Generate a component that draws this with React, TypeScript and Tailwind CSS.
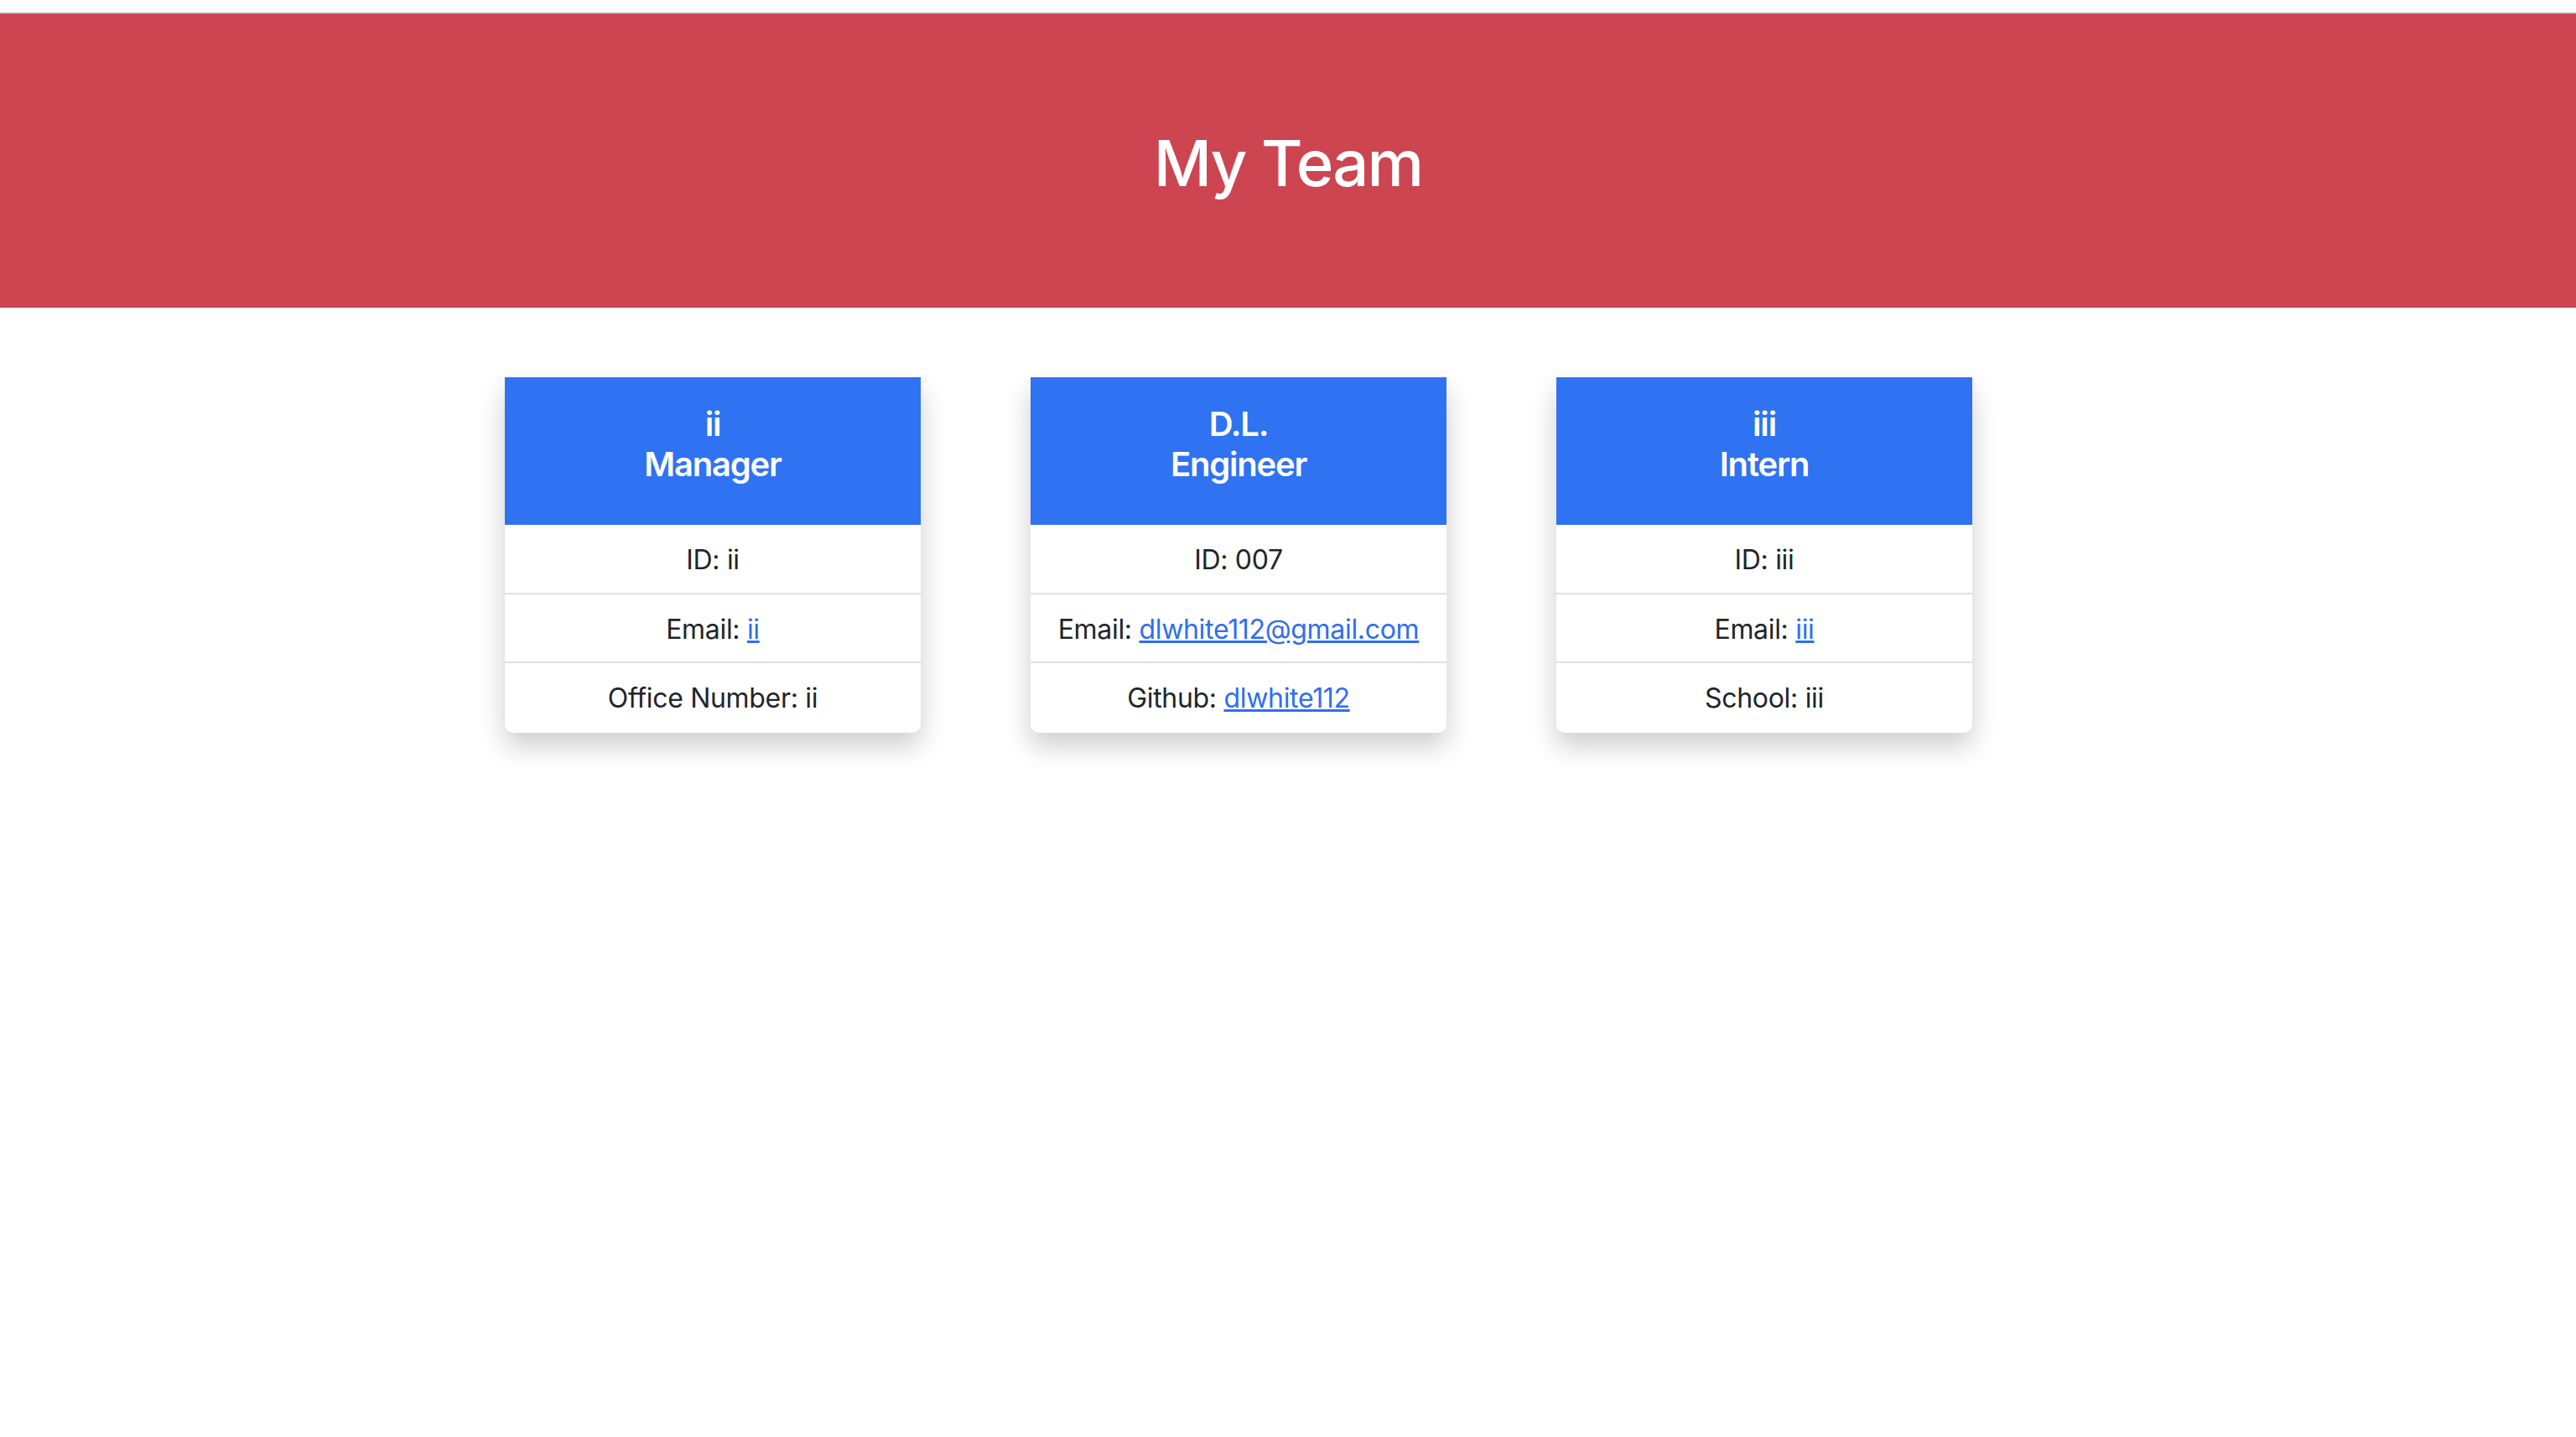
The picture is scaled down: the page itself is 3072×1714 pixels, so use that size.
type Member = {
  name: string;
  role: string;
  id: string;
  email: string;
  extraLabel: string;
  extraValue: string;
  extraLink?: boolean;
};

const team: Member[] = [
  { name: "ii", role: "Manager", id: "ii", email: "ii", extraLabel: "Office Number", extraValue: "ii" },
  {
    name: "D.L.",
    role: "Engineer",
    id: "007",
    email: "dlwhite112@gmail.com",
    extraLabel: "Github",
    extraValue: "dlwhite112",
    extraLink: true,
  },
  { name: "iii", role: "Intern", id: "iii", email: "iii", extraLabel: "School", extraValue: "iii" },
];

function Card({ m }: { m: Member }) {
  return (
    <div className="w-[496px] bg-white rounded-b-[10px] shadow-[0_16px_32px_rgba(0,0,0,0.2)]">
      <div className="bg-[#2f72f2] text-white text-center h-[176px] pb-[16px] flex flex-col justify-center text-[40px] leading-[48px] font-semibold tracking-[-0.03em]">
        <div>{m.name}</div>
        <div>{m.role}</div>
      </div>
      <ul className="text-[#212529] text-[32px] leading-[48px] text-center tracking-[-0.01em]">
        <li className="pt-[18px] pb-[15px] border-b-2 border-[#dfdfdf]">ID: {m.id}</li>
        <li className="pt-[18px] pb-[14px] border-b-2 border-[#dfdfdf]">
          Email:{" "}
          <a href={`mailto:${m.email}`} className="text-[#2f6ef0] underline">
            {m.email}
          </a>
        </li>
        <li className="pt-[18px] pb-[17px]">
          {m.extraLabel}:{" "}
          {m.extraLink ? (
            <a href="#" className="text-[#2f6ef0] underline">
              {m.extraValue}
            </a>
          ) : (
            m.extraValue
          )}
        </li>
      </ul>
    </div>
  );
}

export default function App() {
  return (
    <div className="min-h-[1714px] bg-white font-['Inter','Noto_Sans',sans-serif]">
      <div className="h-[16px] bg-white border-b-2 border-[#dadada]" />
      <header className="bg-[#cc4550] h-[351px] flex items-center justify-center">
        <h1 className="text-white text-[76px] leading-[96px] font-medium tracking-[-0.025em] mt-[4px]">My Team</h1>
      </header>
      <main className="pt-[83px] pl-[602px] flex items-start gap-[131px]">
        {team.map((m) => (
          <Card key={m.role} m={m} />
        ))}
      </main>
    </div>
  );
}
